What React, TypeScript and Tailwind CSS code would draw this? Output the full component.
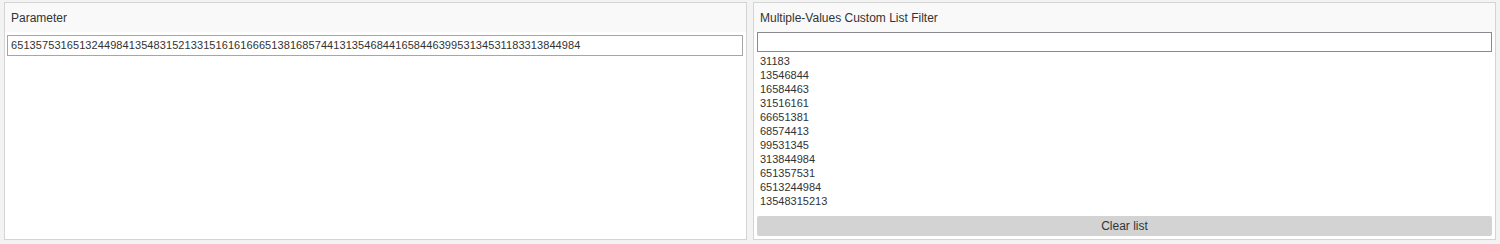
const values = [
  "31183",
  "13546844",
  "16584463",
  "31516161",
  "66651381",
  "68574413",
  "99531345",
  "313844984",
  "651357531",
  "6513244984",
  "13548315213",
];

const paramValue =
  "65135753165132449841354831521331516161666513816857441313546844165844639953134531183313844984";

export default function App() {
  return (
    <div className="w-[1500px] h-[244px] bg-[#f3f3f3] flex gap-[6px] px-[4px] pt-[2px] pb-[4px] font-['Liberation_Sans',Arial,sans-serif] text-[#333333]">
      {/* Parameter panel */}
      <div className="flex-1 flex flex-col border border-[#d4d4d4] bg-white">
        <div className="h-[29px] bg-[#f9f9f9] px-[6px] flex items-center text-[12px]">Parameter</div>
        <div className="pt-[3px] pl-[2px] pr-[3px]">
          <div className="h-[21px] border border-[#a6a6a6] bg-white px-[3px] flex items-center text-[11px] tracking-[0.08px] leading-none whitespace-nowrap overflow-hidden">
            {paramValue}
          </div>
        </div>
      </div>

      {/* Custom list filter panel */}
      <div className="flex-1 flex flex-col border border-[#d4d4d4] bg-white">
        <div className="h-[29px] bg-[#f9f9f9] px-[6px] flex items-center text-[12px]">
          Multiple-Values Custom List Filter
        </div>
        <div className="flex-1 flex flex-col px-[3px] pb-[3px]">
          <div className="h-[20px] border border-[#878a8f] bg-white"></div>
          <ul className="mt-[2px] px-[3px] text-[11px] leading-[14px]">
            {values.map((v) => (
              <li key={v}>{v}</li>
            ))}
          </ul>
          <div className="mt-auto h-[20px] rounded-[2px] bg-[#d3d3d3] flex items-center justify-center text-[12px]">
            Clear list
          </div>
        </div>
      </div>
    </div>
  );
}
